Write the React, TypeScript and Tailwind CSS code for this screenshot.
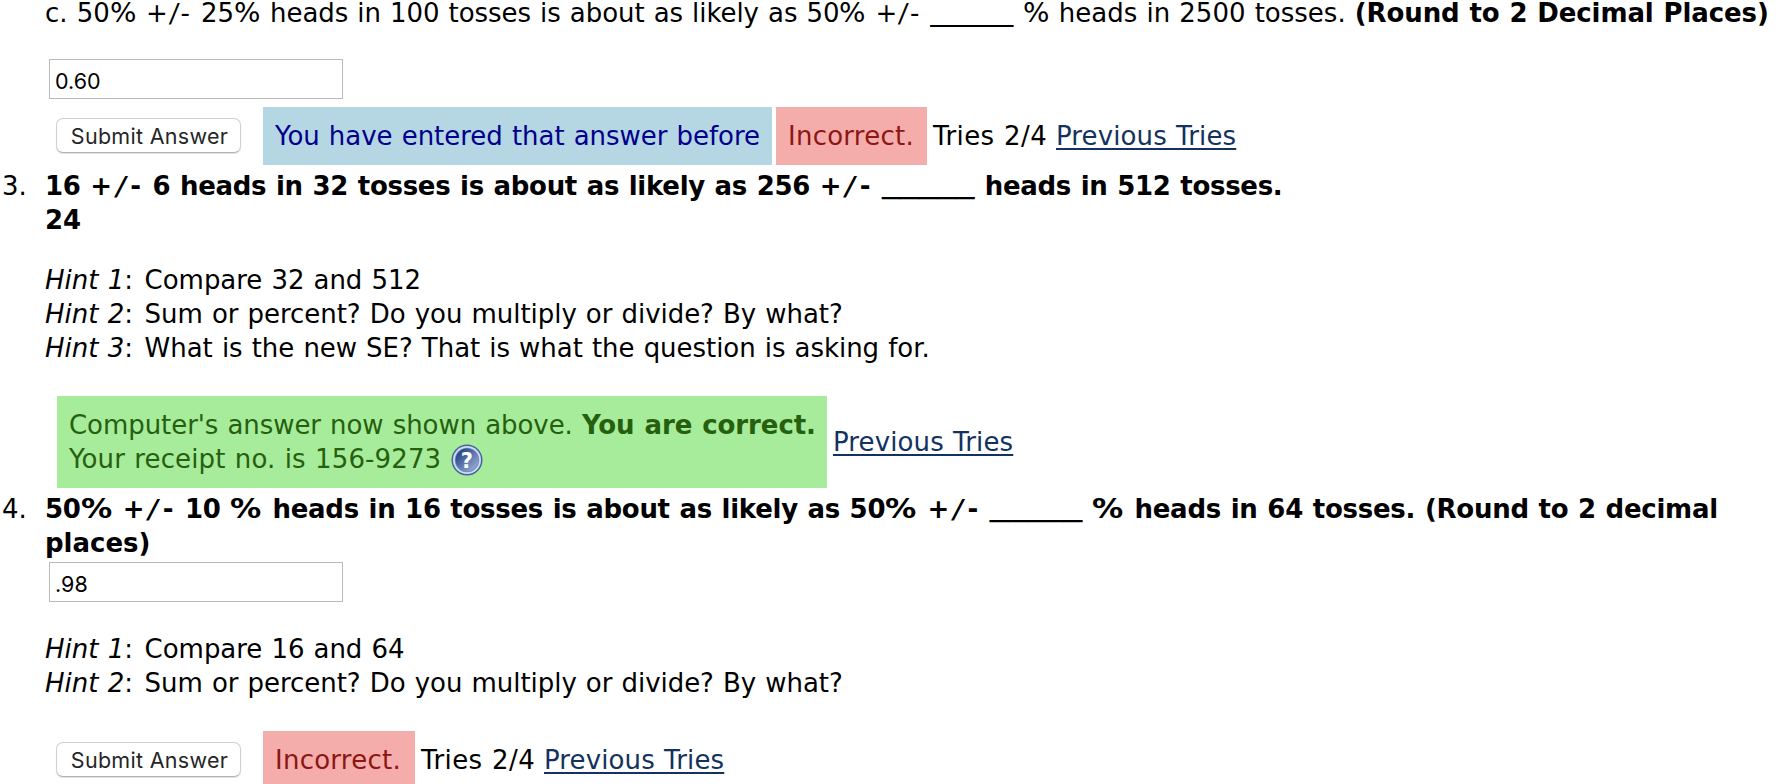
import type { ReactNode } from "react"

function Blank({ bold }: { bold?: boolean }) {
  return bold ? (
    <span className="relative -top-px inline-block h-[24px] w-[93px] align-baseline font-['Liberation_Sans',sans-serif] text-[33.3px] leading-[24px] tracking-normal [text-shadow:0_1px_0_currentColor]">_____</span>
  ) : (
    <span className="relative -top-px inline-block h-[24px] w-[83px] align-baseline font-['Liberation_Sans',sans-serif] text-[29.7px] leading-[24px] tracking-normal">_____</span>
  )
}

// "+/-" and "%" are set a little wider than the surrounding text
function PlusMinus({ bold }: { bold?: boolean }) {
  return bold ? (
    <>+<span className="inline-block w-[18.5px] -skew-x-12 text-center tracking-normal">/</span><span className="tracking-[1.8px]">-</span></>
  ) : (
    <>+<span className="inline-block w-[12.7px] -skew-x-6 text-center">/</span><span className="tracking-[2px]">-</span></>
  )
}

function Percent({ bold }: { bold?: boolean }) {
  return bold ? (
    <span className="mr-[6.7px] inline-block origin-left scale-x-[1.2]">%</span>
  ) : (
    <span className="mr-[2.2px] inline-block origin-left scale-x-[1.07]">%</span>
  )
}

function AnswerField({ value }: { value: string }) {
  return (
    <input
      type="text"
      defaultValue={value}
      className="ml-[4px] block h-[40px] w-[294px] border border-[#b9b9b9] bg-white pt-[4px] pl-[5px] font-['Inter',sans-serif] text-[21.5px] text-black outline-none"
    />
  )
}

function SubmitButton() {
  return (
    <button
      type="button"
      className="mb-px h-[35px] w-[185px] rounded-[7px] border border-[#cfcfcf] border-b-[#b4b4b4] bg-white pt-[3px] pl-[2px] font-['Inter',sans-serif] text-[21.5px] leading-none tracking-[0.3px] whitespace-nowrap text-[#262626] shadow-[0_1px_1px_rgba(0,0,0,0.12)]"
    >
      Submit Answer
    </button>
  )
}

function Incorrect() {
  return <span className="w-full bg-[#f4adab] py-3 pl-3 tracking-[0.25px] text-[#8b1613]">Incorrect.</span>
}

function Tries() {
  return <span className="ml-[6px] w-[123px] tracking-[0.4px]">Tries 2/4</span>
}

function PreviousTries() {
  return <a className="tracking-[0.12px] text-[#14325f] underline decoration-2 underline-offset-[3px]">Previous Tries</a>
}

function Hint({ n, children }: { n: number; children: ReactNode }) {
  return <p><i>Hint {n}</i><span className="tracking-[2.5px]">:</span> <span className="tracking-[-0.04px]">{children}</span></p>
}

function HelpIcon() {
  return (
    <svg width="32" height="32" viewBox="0 0 32 32" className="mt-[2px] ml-[10px] shrink-0">
      <defs>
        <linearGradient id="help" x1="0" y1="0" x2="1" y2="1">
          <stop offset="0.1" stopColor="#1f3f82" />
          <stop offset="0.95" stopColor="#9fb4da" />
        </linearGradient>
      </defs>
      <circle cx="16" cy="16" r="15.5" fill="#4463a0" />
      <circle cx="16" cy="16" r="14" fill="#d3dcee" />
      <circle cx="16" cy="16" r="12.2" fill="#6f89bd" />
      <circle cx="16" cy="16" r="11.4" fill="url(#help)" />
      <text x="16" y="23.5" textAnchor="middle" fontFamily="DejaVu Sans" fontWeight="bold" fontSize="21" fill="#fff">?</text>
    </svg>
  )
}

export default function App() {
  return (
    <div className="h-[784px] w-full overflow-hidden bg-white font-['DejaVu_Sans',sans-serif] text-[26px] leading-[34px] whitespace-nowrap text-black [word-spacing:0.9px]">
      {/* part c */}
      <section className="pl-[45px]">
        <p className="h-[30px] leading-[26px]">
          c. 50<Percent /> <PlusMinus /> 25<Percent /> <span className="tracking-[-0.06px]">heads in 100 tosses is about as likely as 50</span><Percent /> <PlusMinus /> <Blank /> <Percent /> heads in 2500 tosses. <b className="tracking-[-0.1px]">(Round to 2 Decimal Places)</b>
        </p>
        <div className="mt-[29px]"><AnswerField value="0.60" /></div>
        <div className="mt-[8px] ml-[11px] flex h-[58px] items-center">
          <SubmitButton />
          <span className="ml-[22px] w-[509px] bg-[#b5d6e3] p-3 tracking-[-0.03px] text-[#00008b]">You have entered that answer before</span>
          <span className="ml-[4px] flex w-[151px]"><Incorrect /></span>
          <Tries />
          <PreviousTries />
        </div>
      </section>

      {/* question 3 */}
      <section className="mt-[4px] flex">
        <span className="w-[45px] pl-[2px]">3.</span>
        <div>
          <p className="h-[34px] font-bold tracking-[-0.29px]">16 <PlusMinus bold /> 6 heads in 32 tosses is about as likely as 256 <PlusMinus bold /> <Blank bold /> heads in 512 tosses.</p>
          <p className="font-bold">24</p>
          <div className="mt-[26px]">
            <Hint n={1}>Compare 32 and 512</Hint>
            <Hint n={2}>Sum or percent? Do you multiply or divide? By what?</Hint>
            <Hint n={3}>What is the new SE? That is what the question is asking for.</Hint>
          </div>
          <div className="mt-[31px] ml-[12px] flex items-center">
            <div className="w-[770px] bg-[#a6ec9a] p-3 text-[#26600f]">
              <p className="tracking-[-0.06px]">Computer's answer now shown above. <b>You are correct.</b></p>
              <p className="flex h-[34px] items-center tracking-[0.13px]">Your receipt no. is 156-9273<HelpIcon /></p>
            </div>
            <span className="ml-[6px]"><PreviousTries /></span>
          </div>
        </div>
      </section>

      {/* question 4 */}
      <section className="mt-[4px] flex">
        <span className="w-[45px] pl-[2px]">4.</span>
        <div>
          <p className="h-[34px] font-bold tracking-[-0.28px]">50<Percent bold /> <PlusMinus bold /> 10 <Percent bold /> heads in 16 tosses is about as likely as 50<Percent bold /> <PlusMinus bold /> <Blank bold /> <Percent bold /> <span className="tracking-[-0.25px]">heads in 64 tosses. (Round to 2 decimal</span></p>
          <p className="font-bold">places)</p>
          <div className="mt-[2px]"><AnswerField value=".98" /></div>
          <div className="mt-[30px]">
            <Hint n={1}>Compare 16 and 64</Hint>
            <Hint n={2}>Sum or percent? Do you multiply or divide? By what?</Hint>
          </div>
          <div className="mt-[31px] ml-[11px] flex h-[58px] items-center">
            <SubmitButton />
            <span className="ml-[22px] flex w-[152px]"><Incorrect /></span>
            <Tries />
            <PreviousTries />
          </div>
        </div>
      </section>
    </div>
  )
}
